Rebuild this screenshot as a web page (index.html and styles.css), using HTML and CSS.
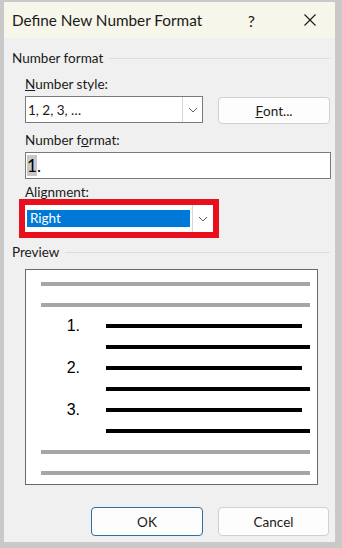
FILE: index.html
```html
<!DOCTYPE html>
<html lang="en">
<head>
    <meta charset="UTF-8">
    <meta name="viewport" content="width=device-width, initial-scale=1.0">
    <title>Define New Number Format</title>
    <link rel="stylesheet" href="styles.css">
</head>
<body>
    <div class="dialog">
        <div class="titlebar">
            <span class="title">Define New Number Format</span>
            <span class="help">?</span>
            <span class="close">
                <svg width="12" height="12" viewBox="0 0 12 12"><path d="M0.5 0.5 L11.5 11.5 M11.5 0.5 L0.5 11.5" stroke="#1a1a1a" stroke-width="1.1" fill="none"/></svg>
            </span>
        </div>

        <div class="content">
            <div class="group-header"><span>Number format</span><div class="rule"></div></div>

            <div class="group">
                <div class="label"><u>N</u>umber style:</div>
                <div class="row">
                    <div class="select">
                        <span class="select-text">1, 2, 3, …</span>
                        <span class="arrow">
                            <svg width="10" height="6" viewBox="0 0 10 6"><path d="M1 1 L5 5 L9 1" stroke="#606060" stroke-width="1" fill="none"/></svg>
                        </span>
                    </div>
                    <div class="button font-btn"><u>F</u>ont...</div>
                </div>

                <div class="label">Number f<u>o</u>rmat:</div>
                <div class="input"><span class="sel">1</span>.</div>

                <div class="label tight">Ali<u>g</u>nment:</div>
                <div class="highlight">
                    <div class="select align-select">
                        <span class="chosen">Right</span>
                        <span class="arrow">
                            <svg width="10" height="6" viewBox="0 0 10 6"><path d="M1 1 L5 5 L9 1" stroke="#606060" stroke-width="1" fill="none"/></svg>
                        </span>
                    </div>
                </div>
            </div>

            <div class="group-header preview-header"><span>Preview</span><div class="rule"></div></div>

            <div class="group">
                <div class="preview">
                    <div class="line gray"></div>
                    <div class="line gray"></div>
                    <div class="line item"><span class="num">1.</span><div class="bar short"></div></div>
                    <div class="line item"><div class="bar long"></div></div>
                    <div class="line item"><span class="num">2.</span><div class="bar short"></div></div>
                    <div class="line item"><div class="bar long"></div></div>
                    <div class="line item"><span class="num">3.</span><div class="bar short"></div></div>
                    <div class="line item"><div class="bar long"></div></div>
                    <div class="line gray"></div>
                    <div class="line gray"></div>
                </div>
            </div>

            <div class="buttons">
                <div class="button ok">OK</div>
                <div class="button">Cancel</div>
            </div>
        </div>
    </div>
</body>
</html>
```

FILE: styles.css
```css
body {
    margin: 0;
    padding: 2px 7px 6px 4px;
    background-color: #c9c9c9;
    font-family: Lato, "Noto Sans", sans-serif;
    font-size: 13.5px;
    color: #1a1a1a;
}
.dialog {
    width: 331px;
    height: 540px;
    background-color: #f0f0f0;
}
.titlebar {
    height: 36px;
    background-color: #f6f6ea;
    display: flex;
    align-items: center;
    padding-left: 8px;
}
.title {
    font-size: 15.3px;
    flex: 1;
}
.help {
    font-size: 16px;
    margin-right: 49px;
}
.close {
    display: flex;
    margin-right: 19px;
}
.content {
    padding: 0 4px 0 8px;
}
.group-header {
    display: flex;
    align-items: center;
    height: 20px;
    margin-top: 10px;
}
.group-header .rule {
    flex: 1;
    height: 1px;
    background-color: #dcdcdc;
    margin-left: 6px;
    margin-right: 1px;
}
.preview-header {
    margin-top: 4px;
}
.group {
    padding-left: 13px;
}
.label {
    height: 20px;
    line-height: 20px;
    margin-top: 6px;
}
.label.tight {
    height: 14px;
    line-height: 14px;
}
.row {
    display: flex;
    margin-top: 2px;
}
.select {
    box-sizing: border-box;
    width: 178px;
    height: 27px;
    background-color: #fff;
    border: 1px solid #7a7a7a;
    display: flex;
    align-items: center;
}
.select-text {
    flex: 1;
    padding-left: 2px;
}
.arrow {
    width: 19px;
    height: 100%;
    border-left: 1px solid #d6d6d6;
    display: flex;
    align-items: center;
    justify-content: center;
}
.button {
    box-sizing: border-box;
    width: 112px;
    height: 27px;
    background-color: #fdfdfd;
    border: 1px solid #d0d0d0;
    border-radius: 4px;
    display: flex;
    align-items: center;
    justify-content: center;
}
.font-btn {
    margin-left: 15px;
    margin-top: 1px;
}
.input {
    box-sizing: border-box;
    height: 27px;
    margin-top: 2px;
    background-color: #fff;
    border: 1px solid #7a7a7a;
    font-size: 17px;
    display: flex;
    align-items: center;
    padding-left: 1px;
    color: #000;
}
.sel {
    background-color: #c8c8c8;
    line-height: 21px;
}
.highlight {
    width: 188px;
    border: 6px solid #e8101c;
    margin-left: -6px;
}
.align-select {
    width: 188px;
    border: none;
}
.chosen {
    flex: 1;
    margin-left: 2px;
    height: 17px;
    line-height: 17px;
    background-color: #0078d7;
    color: #fff;
    padding-left: 3px;
}
.align-select .arrow {
    width: 20px;
    margin-left: 2px;
}
.preview {
    box-sizing: border-box;
    width: 293px;
    height: 216px;
    margin-top: 7px;
    background-color: #fff;
    border: 1px solid #6a6a6a;
    padding: 12px 0 0 15px;
}
.line {
    height: 4px;
    margin-bottom: 17px;
}
.line.gray {
    width: 269px;
    background-color: #a6a6a6;
}
.line.item {
    display: flex;
    align-items: center;
    padding-left: 65px;
}
.num {
    font-family: "Liberation Sans", Arial, sans-serif;
    font-size: 16px;
    line-height: 4px;
    width: 39px;
    margin-left: -65px;
    margin-right: 26px;
    text-align: right;
    color: #000;
}
.bar {
    height: 4px;
    background-color: #000;
}
.bar.short {
    width: 196px;
}
.bar.long {
    width: 204px;
}
.buttons {
    display: flex;
    justify-content: flex-end;
    gap: 15px;
    margin-top: 22px;
    margin-right: 2px;
}
.buttons .button {
    height: 29px;
    width: 111px;
}
.button.ok {
    width: 112px;
    border-color: #2f6f9f;
}
```
